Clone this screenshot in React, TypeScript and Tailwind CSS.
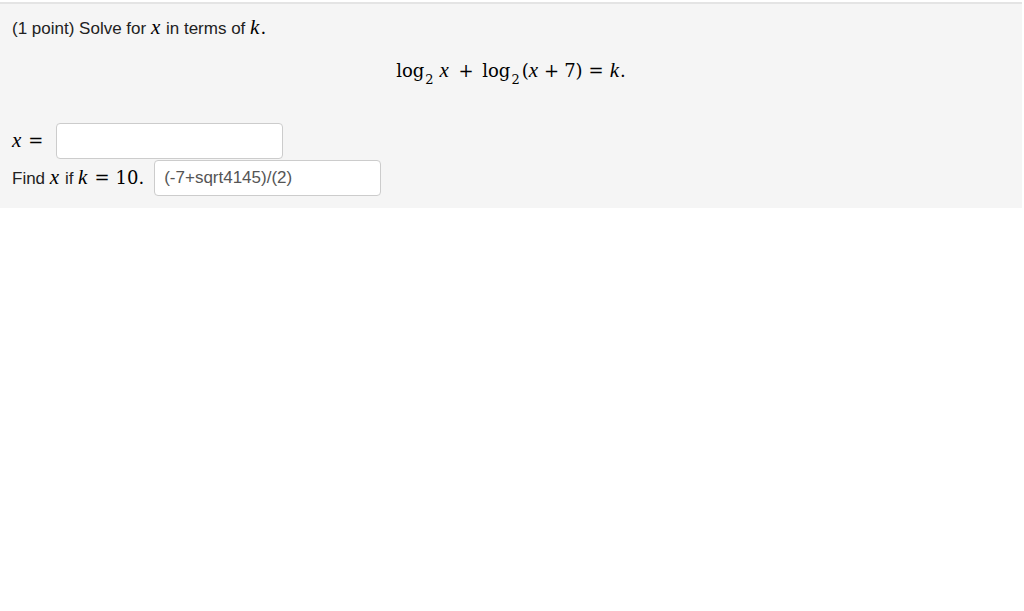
import React from "react";

// Small helpers for the math bits (MathJax-ish look)
const MI = ({ children }: { children: React.ReactNode }) => (
	<span className="italic font-['Liberation_Serif','DejaVu_Serif',serif] text-[21px] mr-[1px]">{children}</span>
);

const Log2 = () => (
	<span>
		log<sub className="text-[13px] ml-[1px]" style={{ verticalAlign: "-4px" }}>2</sub>
	</span>
);

const Math = ({ children, className = "" }: { children: React.ReactNode; className?: string }) => (
	<span className={`font-['DejaVu_Serif','Liberation_Serif',serif] text-[18px] text-black ${className}`}>{children}</span>
);

export default function App() {
	return (
		<div className="min-h-[611px] bg-white font-['Liberation_Sans',Arial,sans-serif] text-[17px] text-[#222]">
			<div className="pt-[2px]">
				<div className="w-[1022px] bg-[#f5f5f5] border-t-2 border-[#e4e4e4] px-3 pt-[13px] pb-[12px]">
					<div className="h-[20px] leading-[20px]">
						(1 point) Solve for{" "}
						<Math>
							<MI>x</MI>
						</Math>{" "}
						in terms of{" "}
						<Math>
							<MI>k</MI>.
						</Math>
					</div>

					<div className="mt-[21px] h-[24px] leading-[24px] text-center">
						<Math>
							<Log2 /> <MI>x</MI> <span className="mx-[3px]">+</span> <Log2 />
							<span className="ml-[2px]">(</span>
							<MI>x</MI>
							<span className="mx-[5px]">+</span>7)<span className="mx-[6px]">=</span>
							<MI>k</MI>.
						</Math>
					</div>

					<div className="mt-[41px] flex items-center">
						<Math>
							<MI>x</MI>
							<span className="ml-[6px]">=</span>
						</Math>
						<input
							type="text"
							className="ml-[13px] w-[227px] h-[36px] bg-white border border-[#cccccc] rounded-[4px] px-[10px] text-[17px] text-[#555] outline-none"
						/>
					</div>

					<div className="mt-[1px] flex items-center">
						<span>
							Find{" "}
							<Math>
								<MI>x</MI>
							</Math>{" "}
							if{" "}
							<Math>
								<MI>k</MI>
								<span className="mx-[6px]">=</span>10.
							</Math>
						</span>
						<input
							type="text"
							defaultValue="(-7+sqrt4145)/(2)"
							className="ml-[10px] w-[227px] h-[36px] bg-white border border-[#cccccc] rounded-[4px] px-[9px] text-[17px] text-[#555] outline-none font-['Liberation_Sans',Arial,sans-serif]"
						/>
					</div>
				</div>
			</div>
		</div>
	);
}
